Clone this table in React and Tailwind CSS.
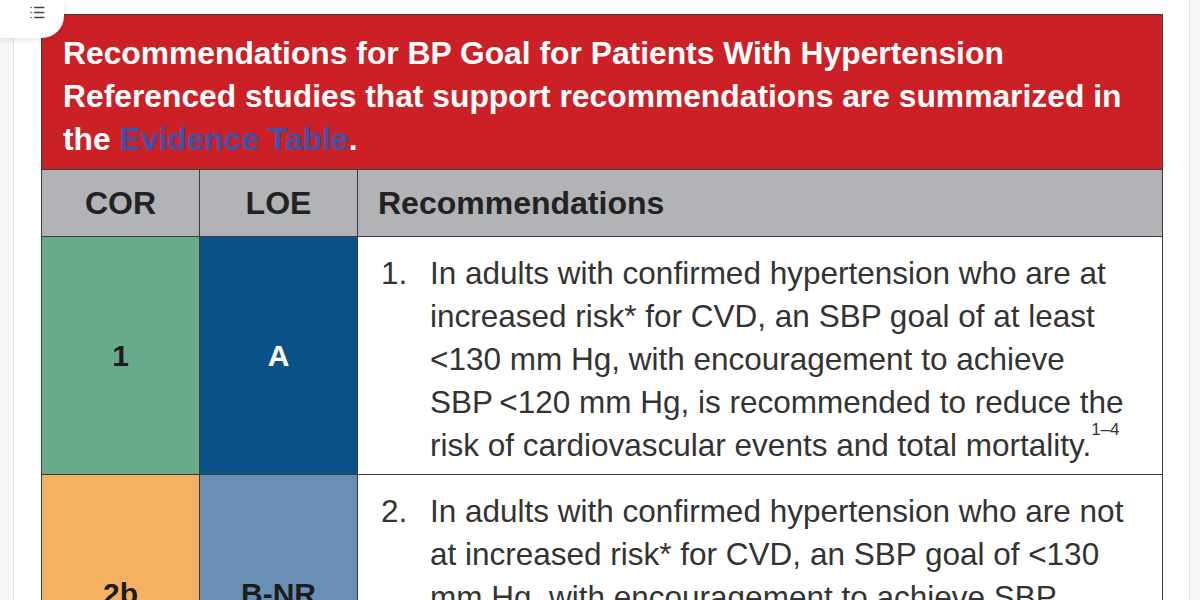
import React from 'react';
import { List } from 'lucide-react';

const rows = [
  {
    cor: '1',
    loe: 'A',
    corBg: 'bg-[#69aa8b]',
    loeBg: 'bg-[#0b5289]',
    loeText: 'text-white',
    num: '1.',
    lines: [
      'In adults with confirmed hypertension who are at',
      'increased risk* for CVD, an SBP goal of at least',
      '<130 mm Hg, with encouragement to achieve',
      'SBP\u2009<120 mm Hg, is recommended to reduce the',
      'risk of cardiovascular events and total mortality.',
    ],
    refs: '1–4',
  },
  {
    cor: '2b',
    loe: 'B-NR',
    corBg: 'bg-[#f5b062]',
    loeBg: 'bg-[#6a8fb5]',
    loeText: 'text-[#1d1d1d]',
    num: '2.',
    lines: [
      'In adults with confirmed hypertension who are not',
      'at increased risk* for CVD, an SBP goal of <130',
      'mm Hg, with encouragement to achieve SBP',
      '<120 mm Hg, may be reasonable to reduce the',
      'risk of cardiovascular events and total mortality.',
    ],
    refs: '5',
  },
];

export default function App() {
  return (
    <div className="relative w-[1200px] h-[600px] overflow-hidden bg-[#f6f6f6] font-['Liberation_Sans',Arial,sans-serif]">
      {/* outline tab */}
      <div className="absolute left-0 top-0 z-10 w-[64px] h-[38px] bg-white rounded-br-[22px] shadow-[0_1px_6px_rgba(0,0,0,0.12)] flex items-start pl-[29px] pt-[4px]">
        <List size={17} strokeWidth={2} className="text-[#444]" />
      </div>

      <div className="ml-[13px] w-[1177px] h-full bg-white border-x border-[#e4e4e4] pt-[14px] pl-[27px]">
        <div className="w-[1122px] border border-[#3a3a3a]">
          {/* red title */}
          <div className="bg-[#cc2027] pl-[21px] pr-[20px] pt-[17px] pb-[8px] text-white font-bold text-[31.8px] leading-[43px]">
            <div>Recommendations for BP Goal for Patients With Hypertension</div>
            <div>Referenced studies that support recommendations are summarized in</div>
            <div>
              the <span className="text-[#4152a6]">Evidence Table</span>.
            </div>
          </div>

          {/* header */}
          <div className="grid grid-cols-[158px_158px_1fr] bg-[#b1b3b6] border-t border-[#3a3a3a] h-[67px] text-[32px] font-bold text-[#222]">
            <div className="flex items-center justify-center border-r border-[#3a3a3a]">COR</div>
            <div className="flex items-center justify-center border-r border-[#3a3a3a]">LOE</div>
            <div className="flex items-center pl-[20px]">Recommendations</div>
          </div>

          {rows.map((r) => (
            <div key={r.num} className="grid grid-cols-[158px_158px_1fr] border-t border-[#3a3a3a]">
              <div className={`flex items-center justify-center border-r border-[#3a3a3a] text-[30px] font-bold text-[#1d1d1d] ${r.corBg}`}>
                {r.cor}
              </div>
              <div className={`flex items-center justify-center border-r border-[#3a3a3a] text-[30px] font-bold ${r.loeBg} ${r.loeText}`}>
                {r.loe}
              </div>
              <div className="flex bg-white pl-[23px] pr-2 pt-[15px] pb-[7px] text-[31.5px] leading-[43px] text-[#333] whitespace-nowrap">
                <span className="w-[49px] shrink-0">{r.num}</span>
                <div>
                  {r.lines.map((l, i) => (
                    <div key={i}>
                      {l}
                      {i === r.lines.length - 1 && (
                        <sup className="text-[17px] align-[0.75em] leading-none">{r.refs}</sup>
                      )}
                    </div>
                  ))}
                </div>
              </div>
            </div>
          ))}
        </div>
      </div>
    </div>
  );
}
